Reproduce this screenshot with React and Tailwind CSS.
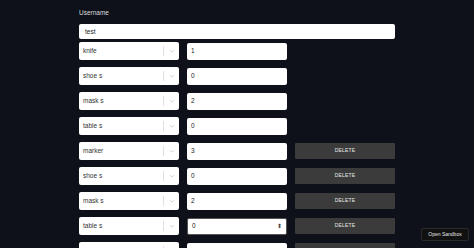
import React from "react";

const rows = [
  { name: "knife", qty: "1", del: false },
  { name: "shoe s", qty: "0", del: false },
  { name: "mask s", qty: "2", del: false },
  { name: "table s", qty: "0", del: false },
  { name: "marker", qty: "3", del: true },
  { name: "shoe s", qty: "0", del: true },
  { name: "mask s", qty: "2", del: true },
  { name: "table s", qty: "0", del: true, focus: true },
  { name: "", qty: "", del: true, hideLabel: true },
];

function Chevron() {
  return (
    <svg width="8" height="8" viewBox="0 0 20 20" style={{ display: "block" }}>
      <path d="M5 8 L10 13 L15 8" fill="none" stroke="#b8b8b8" strokeWidth="1.6" />
    </svg>
  );
}

export default function App() {
  return (
    <div
      className="w-[474px] h-[248px] overflow-hidden bg-[#0f111a] relative"
      style={{ fontFamily: '"Liberation Sans", Arial, sans-serif' }}
    >
      <div className="pl-[79px] pt-[8px] w-[395px]">
        <div className="h-[10px] leading-[10px] text-[6.5px] text-[#dcdcdc]">Username</div>
        <div className="mt-[6px] h-[15px] rounded-[2px] bg-white flex items-center px-[6px] text-[6.5px] text-[#222]">
          test
        </div>
        <div className="mt-[3px] flex flex-col gap-[7px]">
          {rows.map((r, i) => (
            <div key={i} className="flex items-center gap-[8px] h-[18px]">
              <div className="w-[100px] h-[18px] rounded-[2px] bg-white flex items-center">
                <div className="flex-1 pl-[4px] text-[6.5px] text-[#333]">{r.name}</div>
                <div className="w-px h-[10px] bg-[#e0e0e0]"></div>
                <div className="w-[15px] flex justify-center items-center">
                  <Chevron />
                </div>
              </div>
              <div
                className={
                  "w-[100px] h-[17px] rounded-[2px] bg-white flex items-center px-[4px] text-[6.5px] text-[#222] " +
                  (r.focus ? "border-[1.5px] border-[#555]" : "")
                }
              >
                <span className="flex-1">{r.qty}</span>
                {r.focus && <span className="text-[6px] leading-none text-[#444]">⬍</span>}
              </div>
              {r.del && (
                <div className="w-[100px] h-[16px] rounded-[1px] bg-[#3b3b3b] flex items-center justify-center text-[5px] tracking-[0.2px] text-[#e8e8e8]">
                  {r.hideLabel ? "" : "DELETE"}
                </div>
              )}
            </div>
          ))}
        </div>
      </div>
      <div className="absolute left-[421px] top-[228px] w-[48px] h-[13px] rounded-[2px] bg-[#111] border border-[#2a2a2a] flex items-center justify-center text-[5px] text-[#e6e6e6]">
        Open Sandbox
      </div>
    </div>
  );
}
